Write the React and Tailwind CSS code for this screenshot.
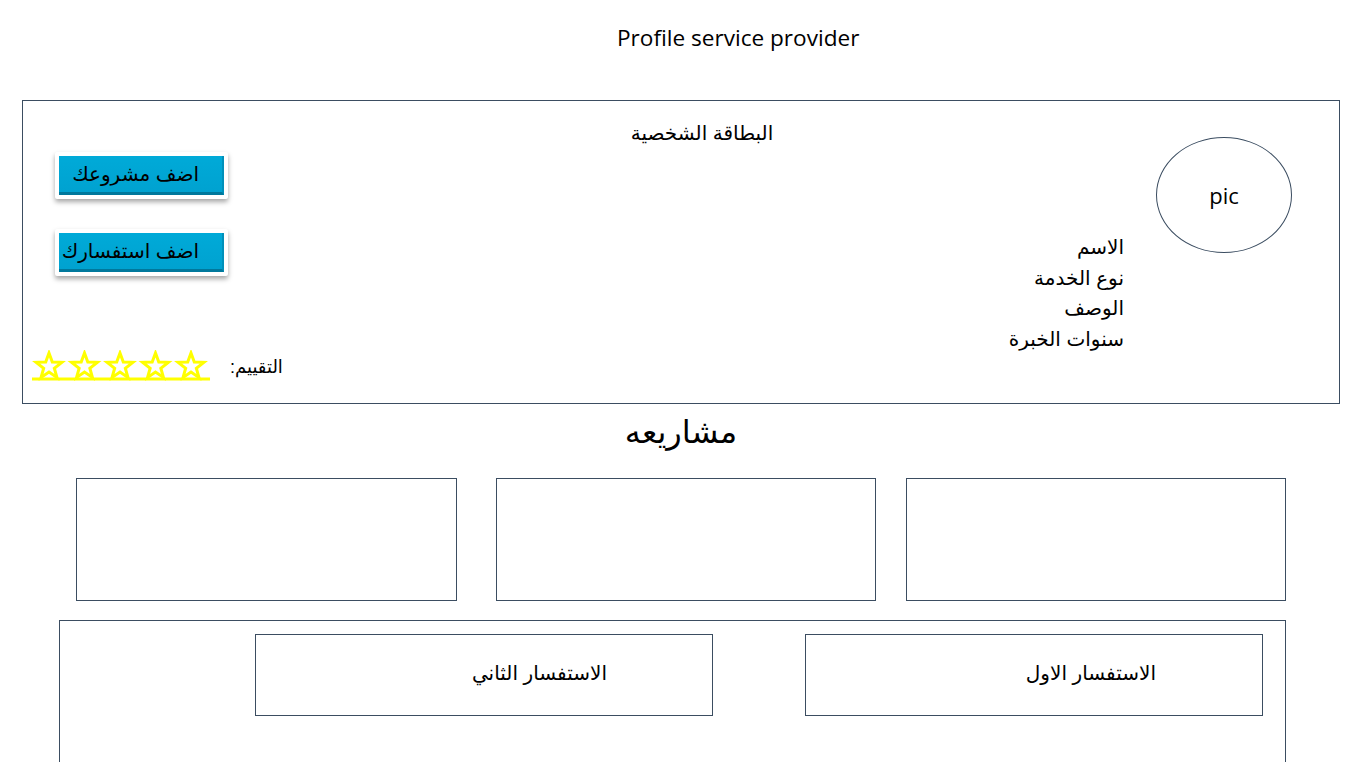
import React from "react";

const AR = { fontFamily: '"Liberation Sans", "DejaVu Sans", Arial, sans-serif' };
const LAT = { fontFamily: '"Open Sans", "Noto Sans", sans-serif' };

function Star({ x }) {
  const cx = x + 15;
  const cy = 15;
  const R = 13.5;
  const r = 5.6;
  const pts = [];
  for (let i = 0; i < 10; i++) {
    const a = -Math.PI / 2 + (i * Math.PI) / 5;
    const rad = i % 2 === 0 ? R : r;
    pts.push(`${(cx + rad * Math.cos(a)).toFixed(2)},${(cy + 1.5 + rad * Math.sin(a)).toFixed(2)}`);
  }
  return <polygon points={pts.join(" ")} fill="white" stroke="#ffff00" strokeWidth="3" strokeLinejoin="miter" />;
}

function Stars() {
  return (
    <svg width="180" height="32" viewBox="0 0 180 32">
      {[2, 37.5, 73, 108.5, 144].map((x, i) => (
        <Star key={i} x={x} />
      ))}
      <line x1="0" y1="29" x2="178" y2="29" stroke="#ffff00" strokeWidth="3" />
    </svg>
  );
}

function Btn({ children }) {
  return (
    <div className="w-[173px] h-[47px] bg-white p-[4px] shadow-[0_3px_5px_rgba(0,0,0,0.35)] rounded-[2px]">
      <div
        dir="rtl"
        className="h-full w-full flex items-center pr-[23px] text-[20px] text-black border-b-[3px] border-b-[#00789c] border-r-[2px] border-r-[#0090ba] bg-[linear-gradient(#00aad8,#00a2d0)]"
        style={AR}
      >
        {children}
      </div>
    </div>
  );
}

export default function App() {
  return (
    <div className="w-[1356px] h-[762px] overflow-hidden bg-white text-black">
      <div className="pt-[22px] pl-[617px] text-[22.6px] leading-[32px] h-[100px]" style={LAT}>
        Profile service provider
      </div>

      <div className="ml-[22px] w-[1318px] h-[304px] border border-[#3b4d61] flex">
        <div className="w-[277px] flex flex-col">
          <div className="ml-[32px] mt-[51px]">
            <Btn>اضف مشروعك</Btn>
          </div>
          <div className="ml-[32px] mt-[30px]">
            <Btn>اضف استفسارك</Btn>
          </div>
          <div className="ml-[9px] mt-[74px] flex items-start">
            <Stars />
            <div className="ml-[18px] mt-[2px] text-[18px] leading-[30px]" style={AR} dir="rtl">
              التقييم:
            </div>
          </div>
        </div>
        <div className="flex-1">
          <div dir="rtl" className="pt-[17px] text-center pl-[104px] text-[20px] leading-[30px]" style={AR}>
            البطاقة الشخصية
          </div>
        </div>
        <div className="w-[339px] flex justify-end pr-[47px]">
          <div dir="rtl" className="mt-[131px] text-[20px] leading-[30.5px] text-right" style={AR}>
            <div>الاسم</div>
            <div>نوع الخدمة</div>
            <div>الوصف</div>
            <div>سنوات الخبرة</div>
          </div>
          <div className="ml-[32px] mt-[36px] w-[136px] h-[116px] rounded-[50%] border border-[#3b4d61] flex items-center justify-center">
            <span className="text-[22px] leading-[30px]" style={LAT}>pic</span>
          </div>
        </div>
      </div>

      <div dir="rtl" className="ml-[22px] w-[1318px] text-center text-[32px] leading-[40px] pt-[8px] h-[74px]" style={AR}>
        مشاريعه
      </div>

      <div className="flex h-[123px]">
        <div className="ml-[76px] w-[381px] h-[123px] border border-[#3b4d61]" />
        <div className="ml-[39px] w-[380px] h-[123px] border border-[#3b4d61]" />
        <div className="ml-[30px] w-[380px] h-[123px] border border-[#3b4d61]" />
      </div>

      <div className="ml-[59px] mt-[19px] w-[1227px] h-[160px] border border-[#3b4d61] border-b-0 flex pt-[13px]">
        <div
          dir="rtl"
          className="ml-[195px] w-[458px] h-[82px] border border-[#3b4d61] flex items-center pr-[105px] pb-[5px] text-[20px]"
          style={AR}
        >
          الاستفسار الثاني
        </div>
        <div
          dir="rtl"
          className="ml-[92px] w-[458px] h-[82px] border border-[#3b4d61] flex items-center pr-[106px] pb-[5px] text-[20px]"
          style={AR}
        >
          الاستفسار الاول
        </div>
      </div>
    </div>
  );
}
